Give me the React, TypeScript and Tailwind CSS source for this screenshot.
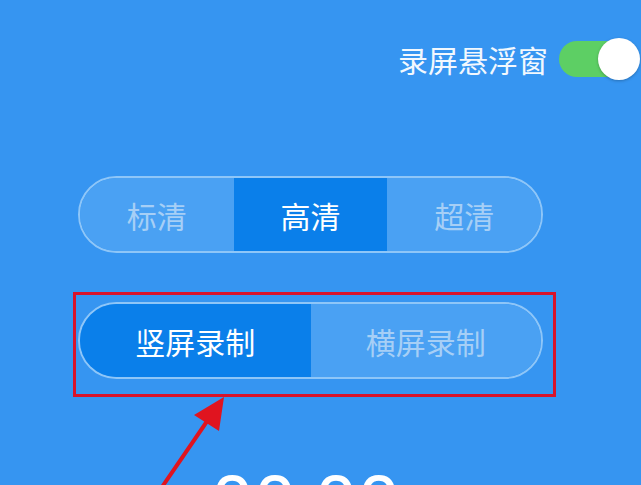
import React from "react";

const FONT = { fontFamily: '"Noto Sans CJK SC", "Noto Sans", sans-serif' };

const QUALITY = [
  { key: "sd", label: "标清" },
  { key: "hd", label: "高清" },
  { key: "uhd", label: "超清" },
];

const ORIENT = [
  { key: "portrait", label: "竖屏录制" },
  { key: "landscape", label: "横屏录制" },
];

function Segmented({ items, active }: { items: { key: string; label: string }[]; active: string }) {
  return (
    <div className="ml-[78px] flex h-[77px] w-[465px] overflow-hidden rounded-full border-2 border-[#8ec6f8]">
      {items.map((it) => (
        <div
          key={it.key}
          className={
            "flex flex-1 items-center justify-center text-[30px] leading-none " +
            (it.key === active ? "bg-[#0a7fea] text-white" : "bg-[#4aa1f3] text-[#a6cff6]")
          }
        >
          {it.label}
        </div>
      ))}
    </div>
  );
}

export default function App() {
  return (
    <div className="relative h-[485px] w-full overflow-hidden bg-[#3695f1]" style={FONT}>
      {/* floating window switch */}
      <div className="flex items-center justify-end pt-[38px] pr-[1px]">
        <span className="mr-[11px] text-[30px] leading-none text-[#f2f8fe]">录屏悬浮窗</span>
        <div className="relative flex h-[42px] w-[81px] items-center">
          <div className="h-[36px] w-[64px] rounded-full bg-[#5dcf64]" />
          <div className="absolute right-0 top-0 h-[42px] w-[42px] rounded-full bg-white shadow-[0_1px_3px_rgba(0,0,0,0.25)]" />
        </div>
      </div>

      <div className="mt-[96px]">
        <Segmented items={QUALITY} active="hd" />
      </div>
      <div className="mt-[49px]">
        <Segmented items={ORIENT} active="portrait" />
      </div>

      <div
        className="mt-[87px] pl-[211px] text-[76px] leading-none text-white"
        style={{ fontFamily: "Roboto, sans-serif" }}
      >
        00:00
      </div>

      {/* annotation */}
      <div className="absolute left-[73px] top-[292px] h-[105px] w-[483px] border-[3px] border-[#d8132b]" />
      <svg className="absolute left-0 top-0" width="641" height="485" viewBox="0 0 641 485">
        <line x1="160" y1="490" x2="212" y2="414" stroke="#e0141f" strokeWidth="4" />
        <polygon points="224,397 194,415 219,431" fill="#e0141f" />
      </svg>
    </div>
  );
}
